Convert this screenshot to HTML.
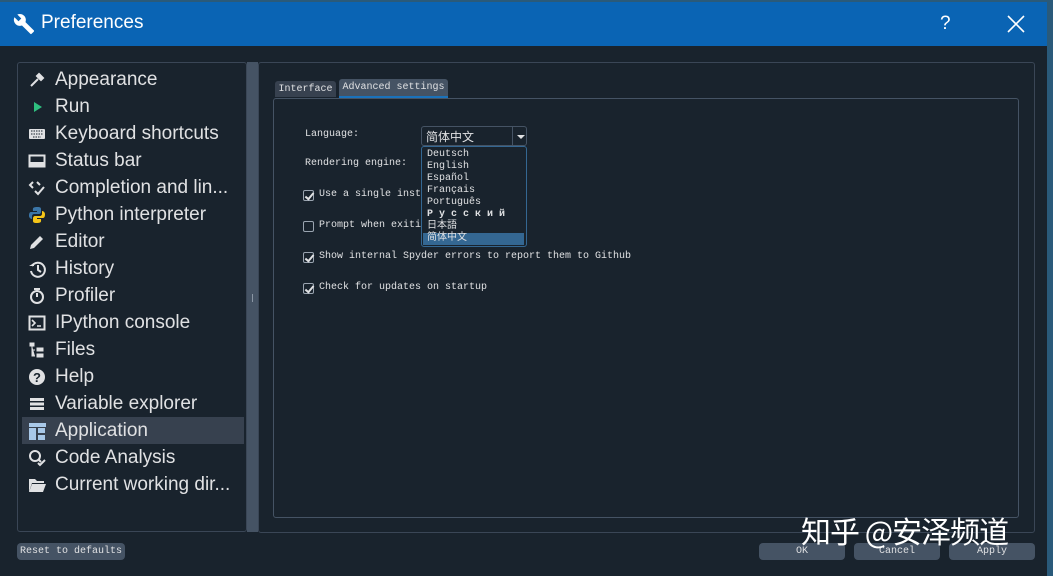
<!DOCTYPE html>
<html><head><meta charset="utf-8"><style>
*{margin:0;padding:0;box-sizing:border-box}
body{width:1053px;height:576px;overflow:hidden;background:#2a5a7a;position:relative;font-family:"Liberation Sans","DejaVu Sans",sans-serif}
.win{position:absolute;left:0;top:2px;width:1047px;height:574px;background:#19232d}
.title{position:absolute;left:0;top:0;width:1047px;height:44px;background:#0a64b4;color:#fff;font-size:19px}
.title .t{position:absolute;left:41px;top:10px}
.abs{position:absolute}
.list{left:17px;top:60px;width:230px;height:470px;border:1px solid #3a4656;border-radius:3px;background:#19232d}
.split{left:247px;top:60px;width:11px;height:470px;background:#455364}
.item{position:absolute;left:4px;height:27px;width:222px;color:#e0e1e3;font-size:19px;line-height:27px;padding-left:33px}
.item.sel{background:#37414f}
.ic{position:absolute;left:6px;top:5px;width:18px;height:18px}
.mono{font-family:"Liberation Mono","DejaVu Sans Mono",monospace;font-size:10px;color:#e0e1e3}
.btn{background:#455364;border-radius:4px;text-align:center;height:17px;line-height:17px}
.cb{position:absolute;width:11px;height:11px;border:1px solid #9aa4b0;border-radius:2px;background:#19232d}
.cb.on::after{content:"";position:absolute;left:3px;top:0px;width:3px;height:7px;border:solid #e0e1e3;border-width:0 2px 2px 0;transform:rotate(40deg)}
</style></head><body>
<div class="win">
<div class="title">
<svg class="abs" style="left:13px;top:11px" width="22" height="22" viewBox="0 0 24 24"><path fill="#fff" d="M22.7 19l-9.1-9.1c.9-2.3.4-5-1.5-6.9-2-2-5-2.4-7.4-1.3L9 6 6 9 1.6 4.7C.4 7.1.9 10.1 2.9 12.1c1.9 1.9 4.6 2.4 6.9 1.5l9.1 9.1c.4.4 1 .4 1.4 0l2.3-2.3c.5-.4.5-1.1.1-1.4z"/></svg>
<div class="t">Preferences</div>
<div class="abs" style="left:940px;top:11px;font-size:19px">?</div>
<svg class="abs" style="left:1007px;top:13px" width="18" height="18"><path d="M1 1L17 17M17 1L1 17" stroke="#fff" stroke-width="1.6"/></svg>
</div>

<div class="abs list">
<div class="item" style="top:3px"><svg class="ic" viewBox="0 0 18 18"><path d="M3 15l7-7M9 5l4 4M11 3l4 4-2 2-4-4z" stroke="#e0e1e3" stroke-width="2" fill="#e0e1e3"/></svg>Appearance</div>
<div class="item" style="top:30px"><svg class="ic" viewBox="0 0 18 18"><path d="M6 4l8 5-8 5z" fill="#2ebf7f"/></svg>Run</div>
<div class="item" style="top:57px"><svg class="ic" viewBox="0 0 18 18"><rect x="1" y="4" width="16" height="10" rx="1" fill="#e0e1e3"/><path d="M3 6h12M3 9h12M5 12h8" stroke="#19232d" stroke-width="1" stroke-dasharray="1.5 1"/></svg>Keyboard shortcuts</div>
<div class="item" style="top:84px"><svg class="ic" viewBox="0 0 18 18"><rect x="1.5" y="3.5" width="15" height="11" fill="none" stroke="#e0e1e3" stroke-width="2"/><rect x="1" y="10" width="16" height="5" fill="#e0e1e3"/></svg>Status bar</div>
<div class="item" style="top:111px"><svg class="ic" viewBox="0 0 18 18"><path d="M5 3L2 6l3 3M9 3l3 3M7 12l3 3 6-7" stroke="#e0e1e3" stroke-width="2" fill="none"/></svg>Completion and lin...</div>
<div class="item" style="top:138px"><svg class="ic" viewBox="0 0 18 18"><path d="M9 1C4 1 5 3 5 5h4v1H3C1 6 1 9 1 10s1 3 3 3V10c0-1 1-2 2-2h5c1 0 2-1 2-2V3c0-2-2-2-4-2z" fill="#3b76a8"/><path d="M9 17c5 0 4-2 4-4H9v-1h6c2 0 2-3 2-4s-1-3-3-3v3c0 1-1 2-2 2H7c-1 0-2 1-2 2v3c0 2 2 2 4 2z" fill="#f5c518"/></svg>Python interpreter</div>
<div class="item" style="top:165px"><svg class="ic" viewBox="0 0 18 18"><path d="M2 16l1-4 9-9 3 3-9 9z" fill="#e0e1e3"/></svg>Editor</div>
<div class="item" style="top:192px"><svg class="ic" viewBox="0 0 18 18"><path d="M4 6a7 7 0 1 1-1 5" stroke="#e0e1e3" stroke-width="2" fill="none"/><path d="M1 6h5V3z" fill="#e0e1e3"/><path d="M10 5v5l3 2" stroke="#e0e1e3" stroke-width="2" fill="none"/></svg>History</div>
<div class="item" style="top:219px"><svg class="ic" viewBox="0 0 18 18"><circle cx="9" cy="10" r="6" stroke="#e0e1e3" stroke-width="2" fill="none"/><path d="M6 2h6M9 6v4" stroke="#e0e1e3" stroke-width="2"/></svg>Profiler</div>
<div class="item" style="top:246px"><svg class="ic" viewBox="0 0 18 18"><rect x="1.5" y="2.5" width="15" height="13" fill="none" stroke="#e0e1e3" stroke-width="2"/><path d="M4 6l3 3-3 3M9 12h4" stroke="#e0e1e3" stroke-width="1.6" fill="none"/></svg>IPython console</div>
<div class="item" style="top:273px"><svg class="ic" viewBox="0 0 18 18"><path d="M2 2h4v3H2zM4 5v10h3M4 9h3M9 7h6v3H9zM9 13h6v3H9z" fill="#e0e1e3" stroke="#e0e1e3" stroke-width="1"/></svg>Files</div>
<div class="item" style="top:300px"><svg class="ic" viewBox="0 0 18 18"><circle cx="9" cy="9" r="8" fill="#e0e1e3"/><text x="9" y="14" font-size="13" font-weight="bold" text-anchor="middle" fill="#19232d" font-family="Liberation Sans">?</text></svg>Help</div>
<div class="item" style="top:327px"><svg class="ic" viewBox="0 0 18 18"><path d="M2 3h14v3H2zM2 7.5h14v3H2zM2 12h14v3H2z" fill="#e0e1e3"/></svg>Variable explorer</div>
<div class="item sel" style="top:354px"><svg class="ic" viewBox="0 0 18 18"><path d="M1 1h17v4H1zM1 6h7v12H1zM10 6h7v5h-7zM10 13h7v5h-7z" fill="#a8c8e8"/></svg>Application</div>
<div class="item" style="top:381px"><svg class="ic" viewBox="0 0 18 18"><circle cx="7" cy="7" r="5" stroke="#e0e1e3" stroke-width="2" fill="none"/><path d="M10 10l3 3M10 14l2 2 5-5" stroke="#e0e1e3" stroke-width="2" fill="none"/></svg>Code Analysis</div>
<div class="item" style="top:408px"><svg class="ic" viewBox="0 0 18 18"><path d="M1 3h6l2 2h7v2H4l-3 9z" fill="#e0e1e3"/><path d="M4 8h14l-3 8H1z" fill="#e0e1e3"/></svg>Current working dir...</div>
</div>
<div class="abs split"><div class="abs" style="left:5px;top:232px;width:1px;height:8px;background:#8a96a4"></div></div>

<div class="abs" style="left:258px;top:60px;width:777px;height:471px;border:1px solid #3a4656;border-radius:3px"></div>
<div class="abs mono btn" style="left:275px;top:79px;width:61px;height:16px;border-radius:3px 3px 0 0;background:#37414f;line-height:17px">Interface</div>
<div class="abs mono btn" style="left:339px;top:77px;width:109px;height:19px;border-radius:3px 3px 0 0;border-bottom:2px solid #1a72bb;line-height:17px">Advanced settings</div>
<div class="abs" style="left:273px;top:96px;width:746px;height:420px;border:1px solid #455364;border-radius:3px"></div>

<div class="abs mono" style="left:305px;top:127px">Language:</div>
<div class="abs mono" style="left:305px;top:156px">Rendering engine:</div>
<div class="abs" style="left:421px;top:124px;width:106px;height:20px;border:1px solid #455364;border-radius:3px;font-family:'Liberation Sans','Noto Sans CJK SC',sans-serif;font-size:12px;color:#e0e1e3;padding:1px 0 0 4px">简体中文<div class="abs" style="left:90px;top:0;width:1px;height:18px;background:#455364"></div><div class="abs" style="left:95px;top:8px;border:4px solid transparent;border-top:4px solid #e0e1e3"></div></div>
<div class="abs" style="left:421px;top:144px;width:106px;height:101px;border:1px solid #346792;border-radius:3px;background:#19232d"></div>
<div class="abs" style="left:423px;top:231px;width:101px;height:12px;background:#346792"></div>
<div class="abs mono" style="left:427px;top:147px;line-height:12px;font-family:'Liberation Mono','Noto Sans CJK JP',monospace">Deutsch<br>English<br>Español<br>Français<br>Português<br><b>Р у с с к и й</b><br>日本語<br>简体中文</div>

<div class="cb on" style="left:303px;top:188px"></div><div class="abs mono" style="left:319px;top:187px">Use a single inst</div>
<div class="cb" style="left:303px;top:219px"></div><div class="abs mono" style="left:319px;top:218px">Prompt when exiti</div>
<div class="cb on" style="left:303px;top:250px"></div><div class="abs mono" style="left:319px;top:249px">Show internal Spyder errors to report them to Github</div>
<div class="cb on" style="left:303px;top:281px"></div><div class="abs mono" style="left:319px;top:280px">Check for updates on startup</div>

<div class="abs mono btn" style="left:17px;top:541px;width:108px">Reset to defaults</div>
<div class="abs mono btn" style="left:759px;top:541px;width:86px">OK</div>
<div class="abs mono btn" style="left:854px;top:541px;width:86px">Cancel</div>
<div class="abs mono btn" style="left:949px;top:541px;width:86px">Apply</div>
<div class="abs" style="left:801px;top:509px;font-family:'Noto Sans CJK SC',sans-serif;font-size:30px;color:#fff;line-height:38px;letter-spacing:-1px">知乎 @安泽频道</div>
</div>
</body></html>
